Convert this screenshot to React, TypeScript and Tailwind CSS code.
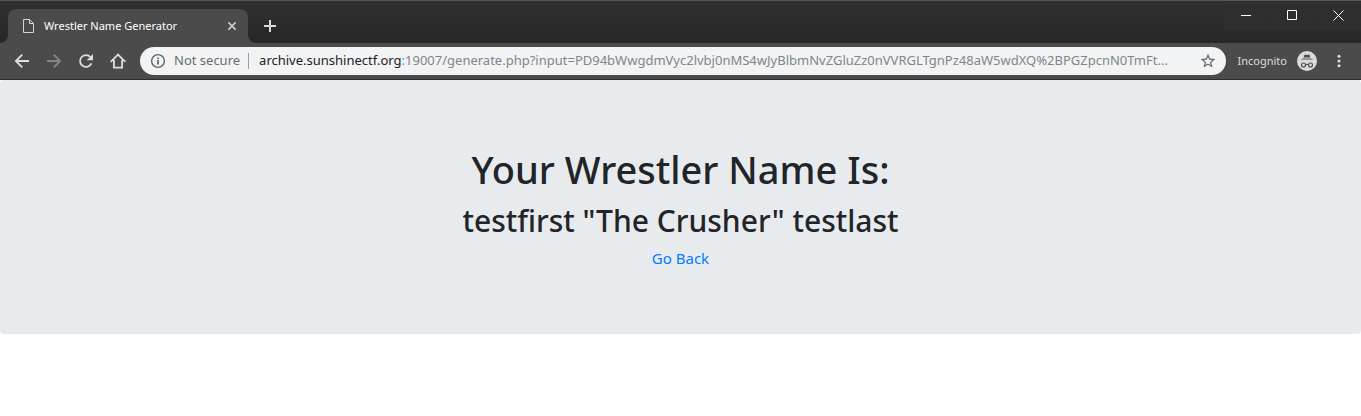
import React, { useState } from 'react';

const HOST = 'archive.sunshinectf.org';
const PATH =
  ':19007/generate.php?input=PD94bWwgdmVyc2lvbj0nMS4wJyBlbmNvZGluZz0nVVRGLTgnPz48aW5wdXQ%2BPGZpcnN0TmFt...';

interface IconButtonProps {
  label: string;
  className?: string;
  children: React.ReactNode;
}

const IconButton: React.FC<IconButtonProps> = ({ label, className = 'w-8', children }) => (
  <button
    type="button"
    aria-label={label}
    className={`flex h-7 shrink-0 items-center justify-center ${className}`}
  >
    {children}
  </button>
);

const WindowButton: React.FC<{ label: string; children: React.ReactNode }> = ({ label, children }) => (
  <button
    type="button"
    aria-label={label}
    className="flex h-[29px] w-[45px] items-center justify-center bg-[#2e2e2e]"
  >
    <svg width="11" height="11" viewBox="0 0 11 11" fill="none" stroke="#fff">
      {children}
    </svg>
  </button>
);

const TabStrip = () => (
  <div className="flex h-[43px] items-end border-t border-[#565656] bg-linear-to-b from-[#303030] to-[#272727]">
    <svg className="shrink-0" width="8" height="8" viewBox="0 0 8 8" fill="#4b4b4b">
      <path d="M8 0v8H0a8 8 0 0 0 8-8z" />
    </svg>
    <div className="flex h-[34px] w-60 items-center rounded-t-lg bg-[#4b4b4b] pr-2 pl-3">
      <svg width="16" height="16" viewBox="0 0 16 16" fill="none" stroke="#d6d6d6">
        <path d="M3.5 1.5h6l4 4v9h-10z" />
        <path d="M9.5 1.5v4h4" />
      </svg>
      <span className="ml-2 grow text-[11px] whitespace-nowrap text-white">
        Wrestler Name Generator
      </span>
      <button type="button" aria-label="Close tab" className="flex size-4 items-center justify-center">
        <svg width="8" height="8" viewBox="0 0 8 8" fill="none" stroke="#dadada" strokeWidth="1.5">
          <path d="M.3.3l7.4 7.4M7.7.3L.3 7.7" />
        </svg>
      </button>
    </div>
    <svg className="shrink-0" width="8" height="8" viewBox="0 0 8 8" fill="#4b4b4b">
      <path d="M0 0v8h8a8 8 0 0 1-8-8z" />
    </svg>
    <button type="button" aria-label="New tab" className="flex h-[34px] w-7 items-center justify-center">
      <svg width="12" height="12" viewBox="0 0 12 12" fill="none" stroke="#dadada" strokeWidth="2">
        <path d="M6 0v12M0 6h12" />
      </svg>
    </button>
    <div className="ml-auto flex gap-px self-start">
      <WindowButton label="Minimize">
        <path d="M0 5.5h10" />
      </WindowButton>
      <WindowButton label="Maximize">
        <path d="M.5.5h9v9h-9z" />
      </WindowButton>
      <WindowButton label="Close">
        <path d="M.5.5l10 10M10.5.5l-10 10" />
      </WindowButton>
    </div>
  </div>
);

const AddressBar = () => {
  const [path, setPath] = useState(PATH);

  return (
    <div className="mx-1.5 flex h-7 min-w-0 grow items-center rounded-full bg-[#f1f3f4] px-2.5 text-[13px]">
      <button type="button" className="flex shrink-0 items-center gap-2 text-[#6a6e73]">
        <svg width="16" height="16" viewBox="0 0 16 16" fill="none" stroke="#5f6368">
          <circle cx="8" cy="8" r="6.4" strokeWidth="1.4" />
          <path d="M8 7v4.5M8 4.4V6" strokeWidth="1.7" />
        </svg>
        Not secure
      </button>
      <span className="mr-2.5 ml-2 h-4 w-px shrink-0 bg-[#9aa0a6]" />
      <label htmlFor="address" className="shrink-0 text-[#202124]">
        {HOST}
      </label>
      <input
        id="address"
        type="text"
        value={path}
        onChange={(e) => setPath(e.target.value)}
        className="min-w-0 grow text-ellipsis text-[#80868b] outline-none"
      />
      <button type="button" aria-label="Bookmark this page" className="ml-2 shrink-0">
        <svg width="16" height="16" viewBox="1 1 22 22" fill="#5f6368">
          <path d="M22 9.24l-7.19-.62L12 2 9.19 8.63 2 9.24l5.46 4.73L5.82 21 12 17.27 18.18 21l-1.63-7.03L22 9.24zM12 15.4l-3.76 2.27 1-4.28-3.32-2.88 4.38-.38L12 6.1l1.71 4.04 4.38.38-3.32 2.88 1 4.28L12 15.4z" />
        </svg>
      </button>
    </div>
  );
};

const Toolbar = () => (
  <div className="flex h-[37px] items-start border-b border-[#2b2b2b] bg-[#4b4b4b] pt-1 pr-2 pl-1.5">
    <IconButton label="Back">
      <svg width="16" height="16" viewBox="0 0 16 16" fill="none" stroke="#dedede" strokeWidth="1.8">
        <path d="M15 8H2.5M8.2 1.7L1.9 8l6.3 6.3" />
      </svg>
    </IconButton>
    <IconButton label="Forward">
      <svg width="16" height="16" viewBox="0 0 16 16" fill="none" stroke="#858585" strokeWidth="1.8">
        <path d="M1 8h12.5M7.8 1.7L14.1 8l-6.3 6.3" />
      </svg>
    </IconButton>
    <IconButton label="Reload">
      <svg width="16" height="16" viewBox="0 0 16 16">
        <path d="M13.4 10.3A5.9 5.9 0 1 1 12.3 4" fill="none" stroke="#dedede" strokeWidth="1.8" />
        <path d="M15 1v6.3H8.7z" fill="#dedede" />
      </svg>
    </IconButton>
    <IconButton label="Home">
      <svg width="16" height="16" viewBox="0 0 16 16" fill="none" stroke="#dedede" strokeWidth="1.8">
        <path d="M.7 8.8L8 1.6l7.3 7.2M3.9 7v7.6h8.2V7" />
      </svg>
    </IconButton>
    <AddressBar />
    <div className="ml-1.5 flex h-7 shrink-0 items-center gap-2.5 text-[11px] text-[#dedede]">
      Incognito
      <svg width="20" height="20" viewBox="0 0 20 20">
        <circle cx="10" cy="10" r="10" fill="#dadada" />
        <path d="M7.6 3.4l2.4.5 2.4-.5.9 3.2H6.7z" fill="#4b4b4b" />
        <path d="M3.3 8.6q1.6-1 3-1.2h7.4q1.4.2 3 1.2z" fill="#4b4b4b" />
        <g fill="none" stroke="#4b4b4b" strokeWidth="1.1">
          <circle cx="6.5" cy="14" r="2" />
          <circle cx="13.5" cy="14" r="2" />
          <path d="M8.5 13.7q1.5-.8 3 0" />
        </g>
      </svg>
    </div>
    <IconButton label="Menu" className="ml-2 w-7">
      <svg width="16" height="16" viewBox="0 0 16 16" fill="#dedede">
        <circle cx="8" cy="3.2" r="1.5" />
        <circle cx="8" cy="8" r="1.5" />
        <circle cx="8" cy="12.8" r="1.5" />
      </svg>
    </IconButton>
  </div>
);

export default function App() {
  return (
    <div className="bg-white font-['Segoe_UI','Noto_Sans','Open_Sans',sans-serif]">
      <TabStrip />
      <Toolbar />
      <main className="rounded bg-[#e8ebee] px-8 py-16 text-center text-[#212529]">
        <h1 className="mb-2 text-[38px] leading-[50px] font-medium">Your Wrestler Name Is:</h1>
        <h2 className="mb-1.5 text-[30px] leading-[38px] font-medium">
          testfirst &quot;The Crusher&quot; testlast
        </h2>
        <p className="text-[15px] leading-6">
          <a href="#" className="text-[#007bff]">
            Go Back
          </a>
        </p>
      </main>
    </div>
  );
}
